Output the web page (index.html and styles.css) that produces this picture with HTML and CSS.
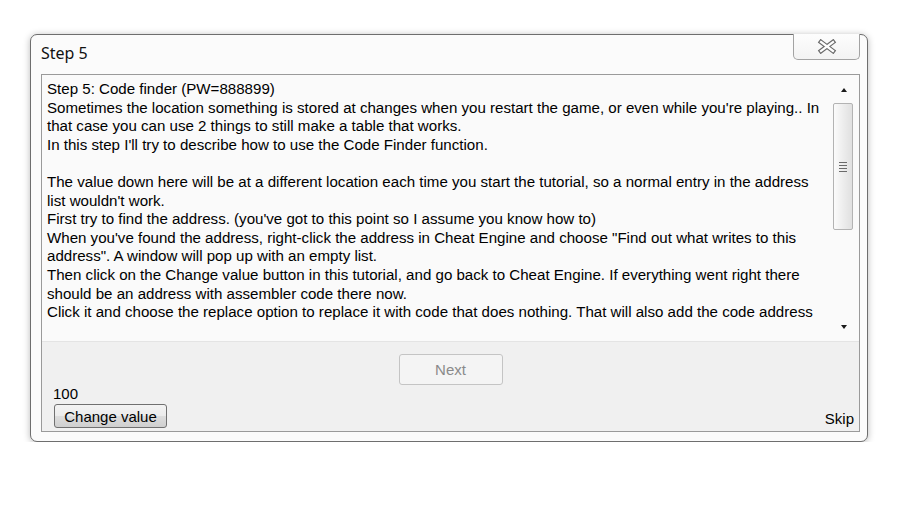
FILE: index.html
```html
<!DOCTYPE html>
<html>
<head>
<meta charset="utf-8">
<link rel="stylesheet" href="styles.css">
</head>
<body>
<div class="page">
  <div class="window">
    <div class="titlebar">
      <span class="title">Step 5</span>
      <div class="close">
        <svg width="20" height="15" viewBox="0 0 20 15">
          <path d="M4 3 L16 12 M16 3 L4 12" stroke="#6a6a6a" stroke-width="4.6" stroke-linecap="square" fill="none"/>
          <path d="M4 3 L16 12 M16 3 L4 12" stroke="#fdfdfd" stroke-width="2.2" stroke-linecap="square" fill="none"/>
        </svg>
      </div>
    </div>
    <div class="client">
      <div class="memo">
        <div class="memo-text">
          <div class="line">Step 5: Code finder (PW=888899)</div>
          <div class="line">Sometimes the location something is stored at changes when you restart the game, or even while you're playing.. In</div>
          <div class="line">that case you can use 2 things to still make a table that works.</div>
          <div class="line">In this step I'll try to describe how to use the Code Finder function.</div>
          <div class="line">&nbsp;</div>
          <div class="line">The value down here will be at a different location each time you start the tutorial, so a normal entry in the address</div>
          <div class="line">list wouldn't work.</div>
          <div class="line">First try to find the address. (you've got to this point so I assume you know how to)</div>
          <div class="line">When you've found the address, right-click the address in Cheat Engine and choose "Find out what writes to this</div>
          <div class="line">address". A window will pop up with an empty list.</div>
          <div class="line">Then click on the Change value button in this tutorial, and go back to Cheat Engine. If everything went right there</div>
          <div class="line">should be an address with assembler code there now.</div>
          <div class="line">Click it and choose the replace option to replace it with code that does nothing. That will also add the code address</div>
        </div>
        <div class="scrollbar">
          <div class="arrow-box"><span class="arrow up"></span></div>
          <div class="track">
            <div class="thumb">
              <span class="grip"></span><span class="grip"></span><span class="grip"></span><span class="grip"></span>
            </div>
          </div>
          <div class="arrow-box"><span class="arrow down"></span></div>
        </div>
      </div>
      <div class="bottom">
        <div class="next-row"><button class="btn next" disabled>Next</button></div>
        <div class="footer">
          <div class="left">
            <div class="value">100</div>
            <button class="btn change">Change value</button>
          </div>
          <span class="skip">Skip</span>
        </div>
      </div>
    </div>
  </div>
</div>
</body>
</html>
```
FILE: styles.css
```css
html, body {
  margin: 0;
  padding: 0;
  background: #ffffff;
}
body {
  font-family: "Liberation Sans", Arial, sans-serif;
  color: #000;
}
.page {
  padding: 34px 0 0 30px;
}
.window {
  width: 838px;
  height: 408px;
  box-sizing: border-box;
  border: 1px solid #6e6e6e;
  border-radius: 7px;
  background: #fbfbfb;
  box-shadow: 0 1px 7px rgba(0, 0, 0, 0.28);
  padding: 0 7px 9px 10px;
  display: flex;
  flex-direction: column;
}
.titlebar {
  height: 39px;
  display: flex;
  justify-content: space-between;
  align-items: flex-start;
}
.title {
  font-family: "Noto Sans", "Open Sans", sans-serif;
  font-size: 16px;
  color: #111;
  margin: 7px 0 0 0;
}
.close {
  width: 67px;
  height: 26px;
  margin-top: -1px;
  box-sizing: border-box;
  border: 1px solid #a3a3a3;
  border-top: none;
  border-radius: 0 0 5px 5px;
  background: linear-gradient(#fdfdfd, #f3f3f3);
  display: flex;
  align-items: center;
  justify-content: center;
}
.close svg {
  display: block;
}
.client {
  flex: 1;
  border: 1px solid #9a9a9a;
  background: #f0f0f0;
  display: flex;
  flex-direction: column;
  min-height: 0;
}
.memo {
  height: 266px;
  flex: none;
  display: flex;
  background: #fafafa;
  border-bottom: 1px solid #e4e4e4;
}
.memo-text {
  flex: 1;
  padding: 5px 0 0 5px;
  font-size: 15.1px;
  line-height: 18.6px;
  white-space: nowrap;
  overflow: hidden;
}
.scrollbar {
  width: 21px;
  margin-right: 5px;
  display: flex;
  flex-direction: column;
}
.arrow-box {
  height: 28px;
  display: flex;
  align-items: center;
  justify-content: center;
}
.arrow {
  width: 0;
  height: 0;
  border-left: 3.5px solid transparent;
  border-right: 3.5px solid transparent;
}
.arrow.up {
  border-bottom: 4px solid #1a1a1a;
  margin-top: 1px;
}
.arrow.down {
  border-top: 4px solid #1a1a1a;
}
.track {
  flex: 1;
}
.thumb {
  height: 127px;
  width: 20px;
  box-sizing: border-box;
  border: 1px solid #b3b3b3;
  border-radius: 2px;
  background: linear-gradient(to right, #fbfbfb, #ececec 55%, #e0e0e0);
  display: flex;
  flex-direction: column;
  align-items: center;
  justify-content: center;
  gap: 2px;
}
.grip {
  display: block;
  width: 8px;
  height: 1px;
  background: #6a6a6a;
}
.bottom {
  flex: 1;
  display: flex;
  flex-direction: column;
  padding-top: 12px;
}
.next-row {
  display: flex;
  justify-content: center;
}
.btn {
  font-family: "Liberation Sans", Arial, sans-serif;
  font-size: 14px;
  padding: 0;
  margin: 0;
  box-sizing: border-box;
  border-radius: 3px;
}
.next {
  width: 104px;
  height: 31px;
  border: 1px solid #c4c4c4;
  background: #f4f4f4;
  color: #8a8a8a;
  font-size: 15px;
}
.footer {
  margin-top: auto;
  display: flex;
  justify-content: space-between;
  align-items: flex-end;
  padding: 0 5px 4px 11px;
}
.value {
  font-size: 15px;
  line-height: 17px;
  margin-bottom: 2px;
}
.change {
  width: 113px;
  height: 24px;
  margin-left: 1px;
  border: 1px solid #707070;
  background: linear-gradient(#f3f3f3 0%, #ebebeb 50%, #dddddd 51%, #cfcfcf 100%);
  color: #000;
  font-size: 15px;
}
.skip {
  font-size: 15px;
  line-height: 18px;
}
```
